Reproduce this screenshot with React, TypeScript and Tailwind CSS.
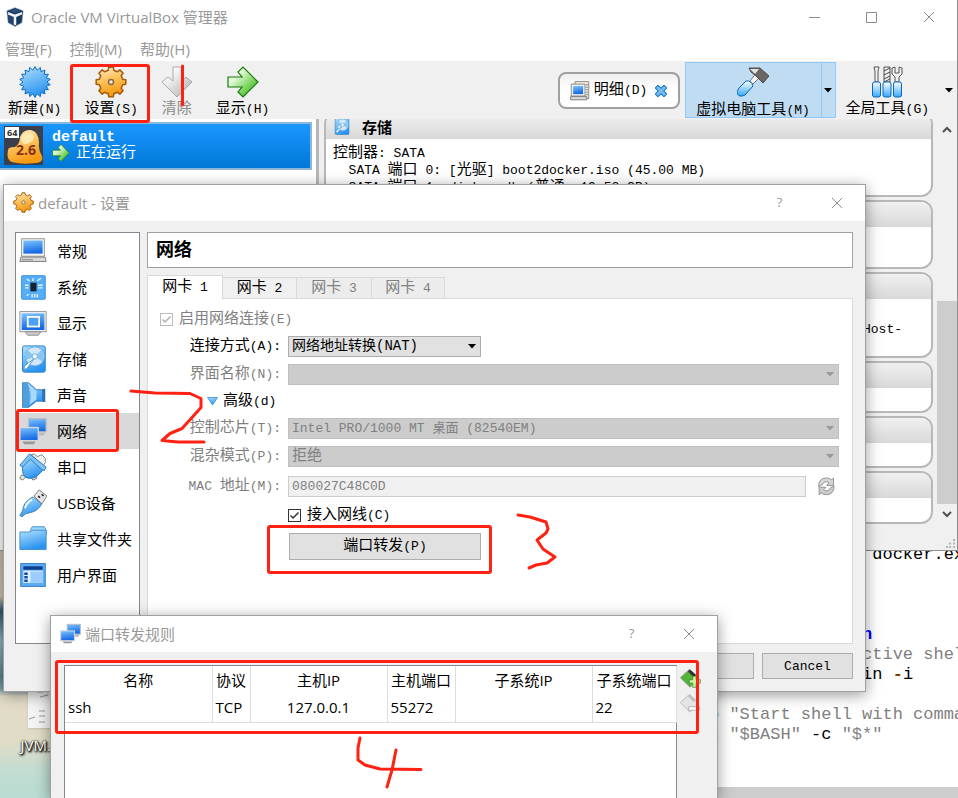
import React, { useState } from "react";

interface IconProps {
  size?: number;
}

// Evenly toothed outline, used by the star and gear icons
const toothed = (points: number, outer: number, inner: number, flat: number) => {
  const out: string[] = [];
  const step = (Math.PI * 2) / points;
  const put = (r: number, a: number) =>
    out.push(`${(16 + r * Math.cos(a)).toFixed(1)},${(16 + r * Math.sin(a)).toFixed(1)}`);
  for (let i = 0; i < points; i++) {
    const a = i * step - Math.PI / 2;
    put(outer, a - step * flat);
    put(outer, a + step * flat);
    put(inner, a + step * (0.5 - flat));
    put(inner, a + step * (0.5 + flat));
  }
  return out.join(" ");
};

function Gradients() {
  return (
    <svg width="0" height="0" className="absolute" aria-hidden="true">
      <defs>
        <linearGradient id="blue" x1="0" y1="0" x2="0.4" y2="1">
          <stop offset="0" stopColor="#b4e2ff" />
          <stop offset="1" stopColor="#2b94f0" />
        </linearGradient>
        <linearGradient id="screen" x1="0" y1="0" x2="0.2" y2="1">
          <stop offset="0" stopColor="#7cc4ff" />
          <stop offset="1" stopColor="#1469e4" />
        </linearGradient>
        <linearGradient id="orange" x1="0" y1="0" x2="0.3" y2="1">
          <stop offset="0" stopColor="#ffefc8" />
          <stop offset="0.5" stopColor="#fcc25c" />
          <stop offset="1" stopColor="#f59a12" />
        </linearGradient>
        <linearGradient id="green" x1="0" y1="0" x2="1" y2="1">
          <stop offset="0.3" stopColor="#e4fbd6" />
          <stop offset="0.9" stopColor="#2bb50c" />
        </linearGradient>
        <linearGradient id="silver" x1="0" y1="0" x2="1" y2="1">
          <stop offset="0.2" stopColor="#ffffff" />
          <stop offset="1" stopColor="#aaaaaa" />
        </linearGradient>
        <linearGradient id="handle" x1="0" y1="0" x2="0" y2="1">
          <stop offset="0" stopColor="#ffffff" />
          <stop offset="1" stopColor="#35a9fb" />
        </linearGradient>
      </defs>
    </svg>
  );
}

function Icon({ size = 32, children }: IconProps & { children: React.ReactNode }) {
  return (
    <svg width={size} height={size} viewBox="0 0 32 32" className="shrink-0" aria-hidden="true">
      {children}
    </svg>
  );
}

const NewIcon = () => (
  <Icon>
    <polygon points={toothed(18, 15.5, 12, 0)} fill="url(#blue)" stroke="#0d6fc4" />
  </Icon>
);

const GearIcon = ({ size }: IconProps) => (
  <Icon size={size}>
    <polygon
      points={toothed(8, 15, 12, 0.2)}
      fill="url(#orange)"
      stroke="#a55a08"
      strokeWidth="1.5"
      strokeLinejoin="round"
    />
    <circle cx="16" cy="16" r="2.5" fill="#f2ece0" stroke="#8d6a3b" strokeWidth="1.5" />
  </Icon>
);

const DiscardIcon = () => (
  <Icon>
    <path d="M12 1h9v14l4-4 6 5-15 15L1 16l6-5 5 4z" fill="url(#silver)" stroke="#a8a8a8" />
  </Icon>
);

const ShowIcon = ({ size }: IconProps) => (
  <Icon size={size}>
    <path d="M1 11h14l-4-5 5-5 15 15-15 15-5-5 4-5H1z" fill="url(#green)" stroke="#177a08" strokeWidth="1.2" />
  </Icon>
);

const HammerIcon = () => (
  <Icon>
    <path d="M13 14l7-9 4 4-8 8z" fill="#f4f4f4" stroke="#777" />
    <path d="M12 1h11l9 8-6 7-8-8-4-3z" fill="#6b6563" stroke="#4c4c4c" />
    <path d="M13 2h9l-4 5-3-3z" fill="#e2e2e2" />
    <path d="M2 21l7-7q5-1 7 5l-8 9q-6 3-8-2 0-2 2-5z" fill="url(#handle)" stroke="#0a66b8" />
  </Icon>
);

const ToolsIcon = () => (
  <Icon>
    <path d="M3 1h5l-1 4v11H4V5z M13 1h6v15h-6z" fill="#f2f2f2" stroke="#555" />
    <path d="M13 5l6-3M13 9l6-3M13 13l6-3M13 16l6-3" stroke="#444" />
    <path d="M21 2v6l3 3v5h4v-5l3-3V2l-3-1v6h-4V1z" fill="#f2f2f2" stroke="#555" />
    <rect x="1.500" y="16" width="8" height="15" rx="2" fill="url(#handle)" stroke="#0a66b8" />
    <rect x="12" y="16" width="8" height="15" rx="2" fill="url(#handle)" stroke="#0a66b8" />
    <rect x="22.500" y="16" width="8" height="15" rx="2" fill="url(#handle)" stroke="#0a66b8" />
  </Icon>
);

const BoxLogo = () => (
  <Icon size={20}>
    <path d="M16 1l13 5-2 19-11 6-11-6L3 6z" fill="#17365d" stroke="#8fa3b8" />
    <path d="M7 6l9-3 9 3-9 4z" fill="#2c4f7c" />
    <path d="M4 8l10 5v16l-8-5z" fill="#27466f" />
    <path d="M5 8l11 4 11-4v4l-9 4v12l-2 1-2-1V16l-9-4z" fill="#f1f4f8" />
  </Icon>
);

const ComputerIcon = ({ size = 28 }: IconProps) => (
  <Icon size={size}>
    <path d="M3 2h26v20H3z" fill="#f5f5f5" stroke="#888" />
    <path d="M5 4h22v15H5z" fill="url(#screen)" />
    <path d="M2 23h28l1 5H1z" fill="#d8d8d8" stroke="#777" />
    <path d="M3 26h13" stroke="#777" />
  </Icon>
);

// Monitor standing in front of a sheet of settings
const DetailsIcon = () => (
  <Icon size={20}>
    <path d="M8 1h22v27H8z" fill="#f3efe8" stroke="#8b857c" strokeWidth="1.500" />
    <path d="M25 6h4M25 10h4M25 14h4M25 18h4M25 22h4" stroke="#8b857c" strokeWidth="1.500" />
    <path d="M2 5h22v19H2z" fill="#f2f2f2" stroke="#888" strokeWidth="1.500" />
    <path d="M5 8h16v13H5z" fill="url(#screen)" />
    <path d="M1 25h26v5H1z" fill="#dedede" stroke="#777" strokeWidth="1.500" />
  </Icon>
);

const SystemIcon = () => (
  <Icon size={28}>
    <rect x="3" y="3" width="27" height="27" rx="1" fill="#54adf8" stroke="#3289d6" />
    <rect x="13" y="11" width="7" height="10" fill="#16222f" />
    <path
      d="M16 6v3M21 9l4-3M12 9L9 7M7 14h4M7 17h4M22 14h5M22 17h5M15 24v4M18 24v4M21 24v4M11 24l-2 2"
      stroke="#e8f6ff"
      strokeWidth="1.500"
    />
  </Icon>
);

const DisplayIcon = () => (
  <Icon size={28}>
    <rect x="1" y="3" width="30" height="23" fill="#f2f2f2" stroke="#888" />
    <rect x="3" y="5" width="26" height="19" fill="url(#screen)" />
    <rect x="10" y="9" width="13" height="11" fill="#4d9ff7" stroke="#fff" strokeWidth="2" />
    <path d="M7 26h18l-3 4H10z" fill="#ccc" stroke="#888" />
  </Icon>
);

const StorageIcon = ({ size = 28 }: IconProps) => (
  <Icon size={size}>
    <rect x="4" y="1" width="26" height="30" rx="2" fill="url(#blue)" stroke="#1d78c8" />
    <circle cx="18" cy="13" r="11" fill="#cfe9fb" stroke="#5aa6da" />
    <path d="M18 13L9 5q-4 6-1 12zM18 13l9 6q3-8-2-13z" fill="#8ac5ee" />
    <circle cx="18" cy="13" r="3" fill="#f4faff" stroke="#5aa6da" />
    <path d="M17 16L9 27l-3 1v-4z" fill="#fff" stroke="#4994cb" />
  </Icon>
);

const AudioIcon = () => (
  <Icon size={28}>
    <path d="M4 2h7l9 8h7v13h-7l-9 7H4z" fill="url(#blue)" stroke="#2a6ea8" />
    <path d="M10 2q4 14 0 28l-6 1V2z" fill="#4f9fdc" />
    <path d="M12 5q3 11 0 22l8-6V11z" fill="#a9dafa" />
    <path d="M27 9h3v15h-3z" fill="#2b72b0" />
  </Icon>
);

const NetworkIcon = ({ size = 28 }: IconProps) => (
  <Icon size={size}>
    <rect x="11" y="2" width="20" height="15" fill="url(#screen)" stroke="#b9bec4" strokeWidth="1.5" />
    <path d="M22 18h8l-2 3h-6z" fill="#bbb" />
    <rect x="1" y="12" width="21" height="15" fill="url(#screen)" stroke="#d5d9dd" strokeWidth="1.5" />
    <path d="M4 28h15l-2 3H6z" fill="#999" />
  </Icon>
);

const SerialIcon = () => (
  <Icon size={28}>
    <path d="M14 2l3-1 4 3 5-2 4 4v5l-3 4z" fill="#f0f0f0" stroke="#777" />
    <path d="M3 25l-2 4 3 2 4-4zM14 28l2 3 4-2-1-3z" fill="#e8e8e8" stroke="#666" />
    <path d="M5 13l11-8 10 9 1 6-7 7q-9 4-13 0-5-5-2-14z" fill="url(#blue)" stroke="#2272b5" />
    <path d="M1 14L12 1l19 15-2 4-3-1L13 7l-9 9z" fill="#7fc3f5" stroke="#2272b5" />
  </Icon>
);

const UsbIcon = () => (
  <Icon size={28}>
    <path d="M17 8l6-7 9 7-6 9z" fill="#e5e5e5" stroke="#777" />
    <path d="M22 8l2 2M26 6l2 2" stroke="#222" strokeWidth="2" />
    <path d="M16 9l10 8q-4 8-13 10l-5 1-5 4-2-2 3-5q1-11 12-16z" fill="url(#blue)" stroke="#4179a5" />
    <path d="M15 12Q8 16 7 22" stroke="#fff" strokeWidth="2" fill="none" />
  </Icon>
);

const FolderIcon = () => (
  <Icon size={28}>
    <path d="M13 6l2-4h14l2 4v5H13z" fill="#9bd4f9" stroke="#3a8dcb" />
    <path d="M1 8h12l2-2h16v22H1z" fill="url(#blue)" stroke="#3a8dcb" />
  </Icon>
);

const InterfaceIcon = () => (
  <Icon size={28}>
    <rect x="2" y="3" width="28" height="26" fill="#5cabf3" stroke="#2272c0" />
    <rect x="5" y="6" width="22" height="4" fill="#0f3e8c" />
    <rect x="5" y="11" width="22" height="14" fill="#e4f1ff" />
    <rect x="13" y="12" width="14" height="13" fill="#9cccff" />
    <path d="M6 13h4v3H6zM6 17h4v3H6zM6 21h4v3H6z" fill="#0f4fae" />
  </Icon>
);

const RefreshIcon = () => (
  <Icon size={20}>
    <path d="M4 17q0-13 12-14 5 0 9 3l3-3v12H17l4-4q-7-5-11 3z" fill="#d6d6d6" stroke="#909090" strokeWidth="1.500" />
    <path d="M29 16q0 13-12 14-5 0-9-3l-3 3V18h11l-4 4q7 5 11-3z" fill="#cccccc" stroke="#909090" strokeWidth="1.500" />
  </Icon>
);

function RuleIcon({ add }: { add?: boolean }) {
  return (
    <Icon size={22}>
      <path d="M2 14L15 2l14 13-13 13z" fill={add ? "#55b33b" : "#e4e4e4"} stroke={add ? "#8a8a8a" : "#aaa"} />
      <path d="M13 5l3-3 9 8-4 3z" fill={add ? "#333" : "#c0c0c0"} />
      <path
        d={add ? "M15 17h5v-5h5v5h6v5h-6v6h-5v-6h-5z" : "M14 20h16v5H14z"}
        fill={add ? "#c8f4aa" : "#fff"}
        stroke={add ? "#2d861c" : "#999"}
      />
    </Icon>
  );
}

function GuestIcon() {
  return (
    <div className="relative h-[39px] w-[39px] bg-[#3a3f4b]">
      <svg width="39" height="39" viewBox="0 0 39 39" aria-hidden="true">
        <path d="M16 11Q19 3 27 4q8 2 8 13-1 7 3 13 2 6-6 7-14 2-24-1Q2 34 4 24q0-3 7-3 5-3 5-10z" fill="url(#orange)" />
        <path d="M18 10q4-5 9-3 5 3 1 8-4 4-8 3-4-3-2-8z" fill="#ffe9b0" />
      </svg>
      <span className="absolute left-px top-px bg-white px-0.5 font-['Open_Sans',sans-serif] text-[9px] font-bold leading-[11px] text-[#333]">
        64
      </span>
      <span className="absolute bottom-2 left-3 font-['Open_Sans',sans-serif] text-[14px] font-bold leading-[14px] text-[#8c2f16]">
        2.6
      </span>
    </div>
  );
}

// Fixed pitch UI text: the latin runs are set smaller than the Chinese ones
function Song({ text }: { text: string }) {
  return (
    <span className="whitespace-pre font-['Liberation_Mono','Noto_Sans_CJK_SC',monospace] text-[15px] leading-[17px]">
      {text.split(/([\x20-\x7e]+)/).map((part, i) =>
        i % 2 ? (
          <span key={i} className="text-[13px]">
            {part}
          </span>
        ) : (
          part
        ),
      )}
    </span>
  );
}

const CloseGlyph = () => (
  <svg width="12" height="12" viewBox="0 0 12 12" stroke="#8c8c8c" aria-hidden="true">
    <path d="M1 1l10 10M11 1L1 11" />
  </svg>
);

const frameButton = "flex h-8 w-[57px] items-center justify-center text-[#999]";

function DialogTitle({ icon, title }: { icon: React.ReactNode; title: string }) {
  return (
    <header className="flex h-9 items-center bg-white pb-px pl-[9px]">
      {icon}
      <h2 className="ml-1 flex-1 text-[15px] leading-5 text-[#999]">{title}</h2>
      <button className={frameButton} aria-label="帮助">
        <span className="text-[13px]">?</span>
      </button>
      <button className={frameButton} aria-label="关闭">
        <CloseGlyph />
      </button>
    </header>
  );
}

function Arrow({ className }: { className: string }) {
  return (
    <svg width="8" height="5" viewBox="0 0 8 5" className={className} aria-hidden="true">
      <path d="M0 0h8L4 4.500z" fill="currentColor" />
    </svg>
  );
}

const redBox = "pointer-events-none absolute z-10 rounded-[3px] border-3 border-[#ff2112]";

const tools = [
  { label: "新建(N)", icon: <NewIcon /> },
  { label: "设置(S)", icon: <GearIcon />, marked: true },
  { label: "清除", icon: <DiscardIcon />, disabled: true },
  { label: "显示(H)", icon: <ShowIcon /> },
];

function Toolbar() {
  return (
    <div className="flex h-[58px] bg-[#f0f0f0] pl-2">
      <div className="flex gap-[23px]">
        {tools.map((tool) => (
          <button
            key={tool.label}
            disabled={tool.disabled}
            className="relative flex flex-col items-center pt-[5px] disabled:text-[#8a8a8a]"
          >
            {tool.icon}
            <span className="flex pt-[3px]">
              <Song text={tool.label} />
            </span>
            {tool.marked && <span className={`${redBox} -left-3.5 -right-3 -bottom-1 top-[3px]`} />}
          </button>
        ))}
      </div>
      <div className="ml-auto flex">
        <div className="mr-[5px] mt-[11px] flex h-[37px] w-[122px] items-center justify-center gap-1 rounded-lg border-2 border-[#a0a0a0] bg-gradient-to-b from-[#f0f0f0] via-white to-white">
          <DetailsIcon />
          <Song text="明细(D)" />
          <button className="ml-1" aria-label="关闭明细">
            <svg width="12" height="12" viewBox="0 0 12 12" aria-hidden="true">
              <path d="M3 3l6 6M9 3L3 9" stroke="#1b76c4" strokeWidth="5" strokeLinecap="square" />
              <path d="M3 3l6 6M9 3L3 9" stroke="#74bdf3" strokeWidth="3" strokeLinecap="square" />
            </svg>
          </button>
        </div>
        <div className="mt-px flex h-14 w-[151px] border border-[#90c8f6] bg-[#c0dcf3]">
          <button className="flex flex-1 flex-col items-center pt-1">
            <HammerIcon />
            <span className="flex pt-[3px]">
              <Song text="虚拟电脑工具(M)" />
            </span>
          </button>
          <button className="flex w-3.5 items-center justify-center border-l border-[#90c8f6]" aria-label="更多电脑工具">
            <Arrow className="text-black" />
          </button>
        </div>
        <button className="ml-2.5 flex flex-col items-center pt-[5px]">
          <ToolsIcon />
          <span className="flex pt-[3px]">
            <Song text="全局工具(G)" />
          </span>
        </button>
        <button className="ml-3.5 mr-0.5 flex w-3 items-center justify-center" aria-label="更多全局工具">
          <Arrow className="text-black" />
        </button>
      </div>
    </div>
  );
}

interface DetailCardProps {
  title?: React.ReactNode;
  height: string;
  children?: React.ReactNode;
}

function DetailCard({ title, height, children }: DetailCardProps) {
  return (
    <section
      className={`${height} shrink-0 overflow-hidden rounded-xl border-2 border-[#b8b8b8] bg-white`}
    >
      <div className="flex h-[25px] items-center gap-3 bg-gradient-to-b from-[#f0f0f0] to-[#d8d8d8] pl-[7px]">
        {title}
      </div>
      {children}
    </section>
  );
}

function ManagerWindow() {
  return (
    <div className="relative border-b border-r border-[#8f8f8f] bg-white">
      <header className="flex h-9 items-center pb-0.5 pl-[5px]">
        <BoxLogo />
        <h1 className="ml-1.5 flex-1 text-[15px] leading-5 text-[#999]">Oracle VM VirtualBox 管理器</h1>
        <button className={frameButton} aria-label="最小化">
          <svg width="11" height="11" stroke="#8c8c8c"><path d="M0 5.500h11" /></svg>
        </button>
        <button className={frameButton} aria-label="最大化">
          <svg width="11" height="11" stroke="#8c8c8c" fill="none"><path d="M.5 .5h10v10H.5z" /></svg>
        </button>
        <button className={frameButton} aria-label="关闭">
          <CloseGlyph />
        </button>
      </header>
      <nav className="flex h-[25px] items-center gap-[18px] pl-[5px] text-[15px] leading-5 text-[#999]">
        <button>管理(F)</button>
        <button>控制(M)</button>
        <button>帮助(H)</button>
      </nav>
      <Toolbar />
      <div className="flex bg-[#f0f0f0]">
        <div className="w-[319px] border-r-3 border-[#b8b8b8] bg-white pt-[3px]">
          <div className="mr-1 flex h-12 gap-[9px] border-2 border-l-0 border-[#8db6d8] bg-gradient-to-b from-[#1a97ff] to-[#0078d7] pl-1 pt-0.5 text-white">
            <GuestIcon />
            <div className="pt-1">
              <p className="font-['Liberation_Mono',monospace] text-[15px] font-bold leading-[15px]">default</p>
              <p className="flex h-4 items-center gap-1.5">
                <ShowIcon size={18} />
                <Song text="正在运行" />
              </p>
            </div>
          </div>
        </div>
        <div className="min-w-0 flex-1 pl-[5px]">
          <div className="flex">
            <div className="flex h-[405px] min-w-0 flex-1 flex-col justify-end gap-[3px] overflow-hidden">
              <DetailCard
                height="h-[85px]"
                title={
                  <>
                    <StorageIcon size={17} />
                    <h3 className="font-bold">
                      <Song text="存储" />
                    </h3>
                  </>
                }
              >
                <div className="flex flex-col whitespace-nowrap pl-[7px] pt-1.5">
                  <Song text="控制器: SATA" />
                  <Song text="  SATA 端口 0: [光驱] boot2docker.iso (45.00 MB)" />
                  <Song text="  SATA 端口 1: disk.vmdk (普通, 19.53 GB)" />
                </div>
              </DetailCard>
              <DetailCard height="h-[69px]" />
              <DetailCard height="h-[86px]">
                <div className="flex justify-end pr-[29px] pt-[22px]">
                  <Song text="Host-" />
                </div>
              </DetailCard>
              <DetailCard height="h-[52px]" />
              <DetailCard height="h-[52px]" />
              <DetailCard height="h-[53px]" />
            </div>
            {/* Scroll bar */}
            <div className="ml-1 flex w-5 flex-col items-center text-[#505050]">
              <svg width="10" height="20" viewBox="0 0 10 20" stroke="currentColor" strokeWidth="2" fill="none">
                <path d="M1 13l4-4 4 4" />
              </svg>
              <div className="mt-[162px] w-full flex-1 bg-[#cdcdcd]" />
              <svg width="10" height="20" viewBox="0 0 10 20" stroke="currentColor" strokeWidth="2" fill="none">
                <path d="M1 8l4 4 4-4" />
              </svg>
            </div>
          </div>
          <div className="flex h-[26px] items-end justify-end p-0.5">
            <svg width="9" height="9" viewBox="0 0 9 9" fill="#b5b5b5">
              <path d="M7 0h2v2H7zM3 3.500h2v2H3zM7 3.500h2v2H7zM0 7h2v2H0zM3 7h2v2H3zM7 7h2v2H7z" />
            </svg>
          </div>
        </div>
      </div>
    </div>
  );
}

const sections = [
  { name: "常规", icon: <ComputerIcon /> },
  { name: "系统", icon: <SystemIcon /> },
  { name: "显示", icon: <DisplayIcon /> },
  { name: "存储", icon: <StorageIcon /> },
  { name: "声音", icon: <AudioIcon /> },
  { name: "网络", icon: <NetworkIcon /> },
  { name: "串口", icon: <SerialIcon /> },
  { name: "USB设备", icon: <UsbIcon /> },
  { name: "共享文件夹", icon: <FolderIcon /> },
  { name: "用户界面", icon: <InterfaceIcon /> },
];

interface FieldProps {
  id: string;
  label: string;
  height: string;
  disabled?: boolean;
  children: React.ReactNode;
}

function Field({ id, label, height, disabled, children }: FieldProps) {
  return (
    <div className={`${height} flex items-center gap-[7px]`}>
      <label htmlFor={id} className={`flex w-[133px] justify-end ${disabled ? "text-[#808080]" : ""}`}>
        <Song text={label} />
      </label>
      {children}
    </div>
  );
}

interface DropDownProps {
  id: string;
  options: string[];
  look: string;
  disabled?: boolean;
}

function DropDown({ id, options, look, disabled }: DropDownProps) {
  return (
    <div className={`relative ${look}`}>
      <select
        id={id}
        disabled={disabled}
        className="block h-[21px] w-full appearance-none border border-[#adadad] bg-[#e1e1e1] pl-[3px] font-['Liberation_Mono','Noto_Sans_CJK_SC',monospace] leading-[19px] text-black opacity-100 disabled:border-[#bfbfbf] disabled:bg-[#cccccc] disabled:text-[#808080]"
      >
        {options.map((option) => (
          <option key={option}>{option}</option>
        ))}
      </select>
      <Arrow
        className={`pointer-events-none absolute right-[5px] top-2 ${disabled ? "text-[#999]" : "text-black"}`}
      />
    </div>
  );
}

interface TickBoxProps {
  label: string;
  initial: boolean;
  disabled?: boolean;
}

function TickBox({ label, initial, disabled }: TickBoxProps) {
  const [checked, setChecked] = useState(initial);
  const tone = disabled ? "text-[#808080]" : "text-black";
  return (
    <label className={`flex items-center gap-1.5 ${tone}`}>
      <span className="relative flex">
        <input
          type="checkbox"
          checked={checked}
          disabled={disabled}
          onChange={() => setChecked(!checked)}
          className="h-[13px] w-[13px] appearance-none border border-[#333] bg-white disabled:border-[#bcbcbc]"
        />
        {checked && (
          <svg
            width="13"
            height="13"
            viewBox="0 0 13 13"
            fill="none"
            stroke={disabled ? "#b0b0b0" : "#333"}
            strokeWidth="1.500"
            className="pointer-events-none absolute inset-0"
          >
            <path d="M2.500 6.500L5 9l5.500-5.500" />
          </svg>
        )}
      </span>
      <Song text={label} />
    </label>
  );
}

function NetworkPage() {
  return (
    <div className="flex min-w-0 flex-1 flex-col">
      <div className="flex h-9 items-center border border-[#a0a0a0] bg-white pb-0.5 pl-2">
        <h3 className="text-[18px] font-bold leading-6">网络</h3>
      </div>
      <div className="mt-[7px] flex items-end" role="tablist">
        <button role="tab" aria-selected="true" className="relative z-10 -mb-px flex h-6 w-[76px] items-center justify-center border border-b-0 border-[#d9d9d9] bg-white">
          <Song text="网卡 1" />
        </button>
        <button role="tab" className="flex h-[21px] w-[74px] items-center justify-center border border-b-0 border-l-0 border-[#d9d9d9] bg-[#f0f0f0]">
          <Song text="网卡 2" />
        </button>
        <button role="tab" disabled className="flex h-[21px] w-[75px] items-center justify-center border border-b-0 border-l-0 border-[#d9d9d9] bg-[#ececec] text-[#808080]">
          <Song text="网卡 3" />
        </button>
        <button role="tab" disabled className="flex h-[21px] w-[73px] items-center justify-center border border-b-0 border-l-0 border-[#d9d9d9] bg-[#ececec] text-[#808080]">
          <Song text="网卡 4" />
        </button>
      </div>
      <div className="flex-1 border border-[#d9d9d9] bg-white pr-[13px] pt-[7px]">
        <div className="flex h-[27px] items-center pl-3">
          <TickBox label="启用网络连接(E)" initial disabled />
        </div>
        <Field id="attach" label="连接方式(A):" height="h-[27px]">
          <DropDown id="attach" options={["网络地址转换(NAT)", "桥接网卡", "内部网络"]} look="w-[193px] text-[14px]" />
        </Field>
        <Field id="iface" label="界面名称(N):" height="h-7" disabled>
          <DropDown id="iface" options={[""]} look="flex-1 text-[13px]" disabled />
        </Field>
        <div className="flex h-[27px] items-center pl-[59px]">
          <button className="flex items-center gap-[5px]">
            <svg width="11" height="9" viewBox="0 0 11 9" aria-hidden="true">
              <path d="M.5 .5h10L5.500 8z" fill="url(#blue)" stroke="#4aa0dc" />
            </svg>
            <Song text="高级(d)" />
          </button>
        </div>
        <Field id="chip" label="控制芯片(T):" height="h-[27px]" disabled>
          <DropDown id="chip" options={["Intel PRO/1000 MT 桌面 (82540EM)"]} look="flex-1 text-[13px]" disabled />
        </Field>
        <Field id="promisc" label="混杂模式(P):" height="h-7" disabled>
          <DropDown id="promisc" options={["拒绝"]} look="flex-1 text-[15px]" disabled />
        </Field>
        <Field id="mac" label="MAC 地址(M):" height="h-8" disabled>
          <input
            id="mac"
            disabled
            defaultValue="080027C48C0D"
            className="h-[21px] min-w-0 flex-1 border border-[#cccccc] bg-[#f0f0f0] pl-[3px] font-['Liberation_Mono',monospace] text-[13px] text-[#808080]"
          />
          <button disabled className="ml-[3px] mr-[3px]" aria-label="刷新 MAC 地址">
            <RefreshIcon />
          </button>
        </Field>
        <div className="flex h-[27px] items-center pl-[140px]">
          <TickBox label="接入网线(C)" initial />
        </div>
        <div className="flex pl-[141px] pt-1">
          <button className="relative flex h-[27px] w-[192px] items-center justify-center border border-[#adadad] bg-[#e1e1e1]">
            <Song text="端口转发(P)" />
            <span className={`${redBox} -left-[23px] -right-3 -top-[9px] -bottom-[15px]`} />
          </button>
        </div>
      </div>
    </div>
  );
}

function SettingsDialog() {
  return (
    <div
      role="dialog"
      aria-label="default - 设置"
      className="absolute left-[3px] right-[92px] top-[184px] border border-[#a0a0a0] bg-[#f0f0f0] shadow-[0_3px_14px_rgba(0,0,0,0.4)]"
    >
      <DialogTitle icon={<GearIcon size={21} />} title="default - 设置" />
      <div className="flex h-[423px] gap-[7px] pl-[11px] pr-3 pt-[11px]">
        <ul className="w-[125px] border border-[#828790] bg-white text-[15px] leading-5">
          {sections.map((section) => (
            <li key={section.name} className={`relative ${section.name === "网络" ? "bg-[#d9d9d9]" : ""}`}>
              <button className="flex h-9 w-full items-center gap-2.5 whitespace-nowrap pl-[3px]">
                {section.icon}
                {section.name}
              </button>
              {section.name === "网络" && (
                <span className={`${redBox} -bottom-[3px] -top-1 left-0 right-5`} />
              )}
            </li>
          ))}
        </ul>
        <NetworkPage />
      </div>
      <footer className="flex h-[47px] justify-end gap-2 px-3 pt-[9px]">
        <button className="flex h-[26px] w-[91px] items-center justify-center border border-[#adadad] bg-[#e1e1e1]" aria-label="OK" />
        <button className="flex h-[26px] w-[91px] items-center justify-center border border-[#adadad] bg-[#e1e1e1]">
          <Song text="Cancel" />
        </button>
      </footer>
    </div>
  );
}

const columns = [
  { name: "名称", value: "ssh", width: "w-[147px]" },
  { name: "协议", value: "TCP", width: "w-[38px]" },
  { name: "主机IP", value: "127.0.0.1", width: "w-[137px]", center: true },
  { name: "主机端口", value: "55272", width: "w-[68px]" },
  { name: "子系统IP", value: "", width: "w-[137px]" },
  { name: "子系统端口", value: "22", width: "w-[84px]" },
];

function RulesDialog() {
  return (
    <div
      role="dialog"
      aria-label="端口转发规则"
      className="absolute bottom-0 left-[50px] right-[240px] top-[615px] flex flex-col border border-b-0 border-[#a0a0a0] bg-[#f0f0f0] shadow-[0_3px_14px_rgba(0,0,0,0.4)]"
    >
      <DialogTitle icon={<NetworkIcon size={21} />} title="端口转发规则" />
      <div className="relative flex flex-1 gap-1 pl-[13px] pr-4 pt-[13px]">
        <div className="min-w-0 flex-1 border border-b-0 border-[#828790] bg-white">
          <table className="w-full table-fixed border-collapse whitespace-nowrap text-[15px] leading-5">
            <thead>
              <tr className="h-[27px]">
                {columns.map((col) => (
                  <th key={col.name} className={`${col.width} border-r border-[#dcdcdc] p-0 text-center font-normal`}>
                    {col.name}
                  </th>
                ))}
              </tr>
            </thead>
            <tbody>
              <tr className="h-[29px]">
                {columns.map((col) => (
                  <td
                    key={col.name}
                    className={`border-b border-r border-[#dcdcdc] px-[3px] py-0 ${col.center ? "text-center" : ""}`}
                  >
                    {col.value}
                  </td>
                ))}
              </tr>
            </tbody>
          </table>
        </div>
        <div className="flex w-5 flex-col items-end gap-[3px] pt-[3px]">
          <button className="flex" aria-label="添加规则">
            <RuleIcon add />
          </button>
          <button className="flex" aria-label="删除规则" disabled>
            <RuleIcon />
          </button>
        </div>
        <span className={`${redBox} left-1 right-[18px] top-2 h-[74px]`} />
      </div>
    </div>
  );
}

function Editor() {
  return (
    <div className="-mt-1.5 flex w-[300px] flex-col overflow-hidden bg-white">
      <pre className="flex-1 font-['Liberation_Mono',monospace] text-[17px] leading-5 text-black">
        {"                     docker.exe\n\n\n\n"}
        {"if [ $# -eq 0 ]; "}
        <b className="text-[#0000ff]">then</b>
        {"\n  "}
        <span className="text-[#0080c0]">echo</span> <span className="text-[#808080]">"Start interactive shell"</span>
        {"\n  "}
        <span className="text-[#0080c0]">exec</span> <span className="text-[#808080]">"$BASH"</span> --login{" "}
        <b className="text-[#804000]">-</b>i{"\n"}
        <b className="text-[#0000ff]">else</b>
        {"\n  "}
        <span className="text-[#0080c0]">echo</span> <span className="text-[#808080]">"Start shell with command"</span>
        {"\n  "}
        <span className="text-[#0080c0]">exec</span> <span className="text-[#808080]">"$BASH"</span> -c{" "}
        <span className="text-[#808080]">"$*"</span>
      </pre>
      <div className="h-[11px] bg-[#cdcdcd]" />
    </div>
  );
}

function Desktop() {
  return (
    <div className="flex min-w-0 flex-1 flex-col bg-[linear-gradient(180deg,#c8bca9_0,#cfc3b0_45px,#33566c_60px,#8fb4c4_90px,#5c8598_125px,#7fa3ad_138px,#e3dcc8_145px,#e0dcc6_190px,#c2ddd2_220px,#b9dcd3_100%)] pt-[138px]">
      <a href="#jvm" className="flex w-[72px] flex-col items-center pl-[18px]">
        <svg width="34" height="39" viewBox="0 0 34 39" className="shadow" aria-hidden="true">
          <path d="M0 0h34v39H0z" fill="#f4f4f4" />
          <path d="M12 8l8-2M9 3h6M11 22h6M11 27h6M11 33h6M1 30l6-2" stroke="#999" />
        </svg>
        <span className="mt-[7px] text-[15px] leading-5 text-white [text-shadow:0_0_2px_#000,1px_1px_2px_#000,1px_1px_3px_#000]">
          JVM.txt
        </span>
      </a>
    </div>
  );
}

export default function App() {
  return (
    <main className="relative flex h-screen flex-col overflow-hidden bg-white font-['Open_Sans','Noto_Sans_CJK_SC',sans-serif] text-black">
      <Gradients />
      <div className="relative z-10">
        <ManagerWindow />
      </div>
      <div className="flex flex-1">
        <Desktop />
        <Editor />
      </div>
      <div className="absolute inset-0 z-20">
        <SettingsDialog />
        <RulesDialog />
      </div>
      {/* Hand-drawn step numbers */}
      <svg
        className="pointer-events-none absolute inset-0 z-30 h-full w-full"
        fill="none"
        stroke="#ff2112"
        strokeWidth="3"
        strokeLinecap="round"
        strokeLinejoin="round"
        aria-hidden="true"
      >
        <path d="M182.500 66v39" />
        <path d="M131 391l24 2 35 .5 11 5v9l-9 10-10 11-12 5-8 7 16 1.500h26" />
        <path d="M518 515l12 2 16 5 2 7-2 4-9 7 6 9 12 8-8 6-11 2-7 3" />
        <path d="M360 738l-2 10v12l7 5 15 4 41 .5M396 750l-4 20-5 17" />
      </svg>
    </main>
  );
}
